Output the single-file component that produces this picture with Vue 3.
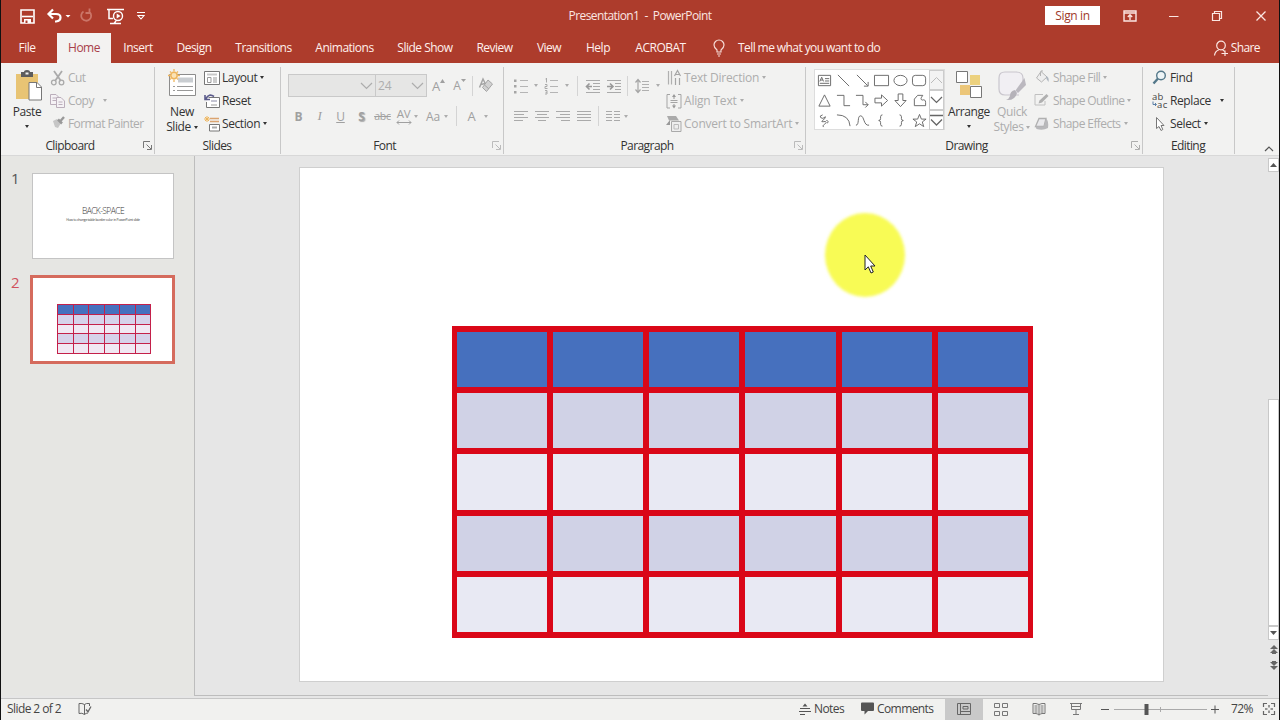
<!-- App.vue -->
<template>
  <div class="window">
    <header class="titlebar">
      <div class="quick">
        <svg class="q-save" viewBox="0 0 16 16" width="16" height="16" v-html="icons.save"></svg>
        <svg class="q-undo" viewBox="0 0 24 16" width="24" height="16" v-html="icons.undo"></svg>
        <svg class="q-redo" viewBox="0 0 16 16" width="16" height="16" v-html="icons.redo"></svg>
        <svg class="q-show" viewBox="0 0 18 16" width="18" height="16" v-html="icons.show"></svg>
        <svg class="q-more" viewBox="0 0 10 10" width="10" height="10" v-html="icons.more"></svg>
      </div>
      <div class="title">Presentation1&nbsp; -&nbsp; PowerPoint</div>
      <div class="controls">
        <button class="signin">Sign in</button>
        <svg class="c-ribbon" viewBox="0 0 14 12" width="14" height="12" v-html="icons.ribbonMode"></svg>
        <svg class="c-min" viewBox="0 0 12 12" width="12" height="12" v-html="icons.min"></svg>
        <svg class="c-restore" viewBox="0 0 12 12" width="12" height="12" v-html="icons.restore"></svg>
        <svg class="c-close" viewBox="0 0 12 12" width="12" height="12" v-html="icons.close"></svg>
      </div>
    </header>

    <nav class="tabs">
      <span
        v-for="tab in tabs"
        :key="tab.name"
        class="tab"
        :class="{ active: tab.name === activeTab }"
        :style="{ width: tab.width + 'px' }"
        @click="activeTab = tab.name"
      >{{ tab.name }}</span>
      <svg class="bulb" viewBox="0 0 14 18" width="14" height="18" v-html="icons.bulb"></svg>
      <span class="tell">Tell me what you want to do</span>
      <span class="share">
        <svg viewBox="0 0 16 16" width="16" height="16" v-html="icons.share"></svg>
        Share
      </span>
    </nav>

    <section class="ribbon">
      <div class="group clipboard">
        <div class="content">
          <div class="big">
            <svg class="paste-icon" viewBox="0 0 28 32" width="28" height="32" v-html="icons.paste"></svg>
            <span>Paste</span>
            <i class="caret"></i>
          </div>
          <div class="commands off">
            <div v-for="c in clipboardCommands" :key="c.text" class="command">
              <svg viewBox="0 0 16 16" width="16" height="16" v-html="icons[c.icon]"></svg>
              <span>{{ c.text }}</span><i v-if="c.caret" class="caret" :class="c.caret"></i>
            </div>
          </div>
        </div>
        <div class="footer"><span>Clipboard</span><svg viewBox="0 0 9 9" width="9" height="9" v-html="icons.launch"></svg></div>
      </div>

      <div class="group slides">
        <div class="content">
          <div class="big">
            <svg class="new-icon" viewBox="0 0 28 32" width="28" height="32" v-html="icons.newSlide"></svg>
            <span>New</span>
            <span>Slide<i class="caret"></i></span>
          </div>
          <div class="commands">
            <div v-for="c in slideCommands" :key="c.text" class="command">
              <svg viewBox="0 0 16 16" width="16" height="16" v-html="icons[c.icon]"></svg>
              <span>{{ c.text }}</span><i v-if="c.caret" class="caret"></i>
            </div>
          </div>
        </div>
        <div class="footer"><span>Slides</span></div>
      </div>

      <div class="group font off">
        <div class="content stack">
          <div class="line first">
            <div class="box name"><svg viewBox="0 0 13 8" width="13" height="8" v-html="icons.chevron"></svg></div>
            <div class="box size"><span>24</span><svg viewBox="0 0 13 8" width="13" height="8" v-html="icons.chevron"></svg></div>
            <span class="cell grow">A<svg viewBox="0 0 5 4" width="5" height="4"><path d="M0 4 L2.5 0 L5 4z" fill="currentColor" /></svg></span>
            <span class="cell shrink">A<svg viewBox="0 0 5 4" width="5" height="4"><path d="M0 0 L2.5 3 L5 0z" fill="currentColor" /></svg></span>
            <i class="rule"></i>
            <svg class="eraser" viewBox="0 0 16 16" width="16" height="16" v-html="icons.eraser"></svg>
          </div>
          <div class="line second">
            <span class="cell bold">B</span>
            <span class="cell italic">I</span>
            <span class="cell under">U</span>
            <span class="cell shadow">S</span>
            <span class="cell strike">abc</span>
            <span class="cell spacing">AV<svg viewBox="0 0 16 5" width="16" height="5"><path d="M1 2.5H15M3 .5 1 2.5 3 4.5M13 .5l2 2-2 2" fill="none" stroke="currentColor" /></svg></span>
            <i class="caret"></i>
            <span class="cell case">Aa</span>
            <i class="caret"></i>
            <i class="rule"></i>
            <span class="cell color">A</span>
            <i class="caret last"></i>
          </div>
        </div>
        <div class="footer"><span>Font</span><svg viewBox="0 0 9 9" width="9" height="9" v-html="icons.launch"></svg></div>
      </div>

      <div class="group paragraph off">
        <div class="content">
          <div class="stack">
            <div class="line first">
              <svg viewBox="0 0 16 16" width="16" height="16" v-html="icons.bullets"></svg>
              <i class="caret"></i>
              <svg viewBox="0 0 16 16" width="16" height="16" v-html="icons.numbers"></svg>
              <i class="caret"></i>
              <i class="rule after-lists"></i>
              <svg viewBox="0 0 16 16" width="16" height="16" v-html="icons.outdent"></svg>
              <svg class="indent" viewBox="0 0 16 16" width="16" height="16" v-html="icons.indent"></svg>
              <i class="rule"></i>
              <svg class="leading" viewBox="0 0 16 16" width="16" height="16" v-html="icons.lineSpacing"></svg>
              <i class="caret"></i>
            </div>
            <div class="line second">
              <svg v-for="a in aligns" :key="a" viewBox="0 0 14 12" width="14" height="12" v-html="icons[a]"></svg>
              <i class="rule"></i>
              <svg viewBox="0 0 14 12" width="14" height="12" v-html="icons.columns"></svg>
              <i class="caret"></i>
            </div>
          </div>
          <div class="commands">
            <div v-for="c in textCommands" :key="c.text" class="command">
              <svg viewBox="0 0 16 16" width="16" height="16" v-html="icons[c.icon]"></svg>
              <span>{{ c.text }}</span><i class="caret"></i>
            </div>
          </div>
        </div>
        <div class="footer"><span>Paragraph</span><svg viewBox="0 0 9 9" width="9" height="9" v-html="icons.launch"></svg></div>
      </div>

      <div class="group drawing">
        <div class="content">
          <div class="gallery">
            <div class="shapes">
              <svg v-for="(s, i) in shapes" :key="i" viewBox="0 0 16 16" width="16" height="16" fill="none" stroke="#666" v-html="s"></svg>
            </div>
            <div class="scroller">
              <span class="dim"><svg viewBox="0 0 13 8" width="13" height="8"><path d="M1 7 6.500 1.500 12 7" fill="none" stroke="currentColor" /></svg></span>
              <span><svg viewBox="0 0 13 8" width="13" height="8" v-html="icons.chevron"></svg></span>
              <span class="expand"><svg viewBox="0 0 13 13" width="13" height="13"><path d="M0 1.500H13M1 5.500 6.500 11 12 5.500" fill="none" stroke="currentColor" stroke-width="1.300" /></svg></span>
            </div>
          </div>
          <div class="big arrange">
            <svg viewBox="0 0 28 32" width="28" height="32" v-html="icons.arrange"></svg>
            <span>Arrange</span>
            <i class="caret"></i>
          </div>
          <div class="big quickstyles off">
            <svg viewBox="0 0 30 32" width="30" height="32" v-html="icons.styles"></svg>
            <span>Quick</span>
            <span>Styles<i class="caret"></i></span>
          </div>
          <div class="commands off">
            <div v-for="c in shapeCommands" :key="c.text" class="command">
              <svg viewBox="0 0 16 16" width="16" height="16" v-html="icons[c.icon]"></svg>
              <span>{{ c.text }}</span><i class="caret"></i>
            </div>
          </div>
        </div>
        <div class="footer"><span>Drawing</span><svg class="off" viewBox="0 0 9 9" width="9" height="9" v-html="icons.launch"></svg></div>
      </div>

      <div class="group editing">
        <div class="content">
          <div class="commands">
            <div v-for="c in editCommands" :key="c.text" class="command">
              <svg viewBox="0 0 16 16" width="16" height="16" v-html="icons[c.icon]"></svg>
              <span>{{ c.text }}</span><i v-if="c.caret" class="caret" :class="c.caret"></i>
            </div>
          </div>
        </div>
        <div class="footer"><span>Editing</span></div>
      </div>
      <svg class="collapse" viewBox="0 0 10 6" width="10" height="6"><path d="M1 5 5 1 9 5" fill="none" stroke="#555" stroke-width="1.200" /></svg>
    </section>

    <main class="main">
      <aside class="panel">
        <div class="item">
          <span class="num">1</span>
          <div class="thumb">
            <p class="thumb-title">BACK-SPACE</p>
            <p class="thumb-sub">How to change table border color in PowerPoint slide</p>
          </div>
        </div>
        <div class="item current">
          <span class="num">2</span>
          <div class="thumb">
            <div class="mini">
              <i v-for="n in 30" :key="n" :class="rowClass(n)"></i>
            </div>
          </div>
        </div>
      </aside>
      <div class="workspace">
        <div class="slide">
          <div class="table">
            <i v-for="n in 30" :key="n" :class="rowClass(n)"></i>
          </div>
          <div class="spot"></div>
          <svg class="pointer" viewBox="0 0 12 20" width="12" height="20">
            <path d="M1 1V16L4.300 12.800 7 19 9.300 18 6.700 12H11z" fill="#fff" stroke="#222" />
          </svg>
        </div>
      </div>
      <div class="scrollbar">
        <span class="arrow"><svg viewBox="0 0 7 4" width="7" height="4"><path d="M0 4 3.500 0 7 4z" fill="#555" /></svg></span>
        <span class="track"></span>
        <span class="thumb-bar"></span>
        <span class="arrow"><svg viewBox="0 0 7 4" width="7" height="4"><path d="M0 0 3.500 4 7 0z" fill="#555" /></svg></span>
        <svg class="page" viewBox="0 0 8 9" width="8" height="9"><path d="M0 4 4 0 8 4zM0 8 4 4 8 8zM2 8h4v1H2z" fill="#666" /></svg>
        <svg class="page" viewBox="0 0 8 9" width="8" height="9"><path d="M0 5 4 9 8 5zM0 1 4 5 8 1zM2 0h4v1H2z" fill="#666" /></svg>
      </div>
    </main>

    <footer class="status">
      <span class="count">Slide 2 of 2</span>
      <svg class="spell" viewBox="0 0 14 13" width="14" height="13" v-html="icons.spell"></svg>
      <svg class="notes-icon" viewBox="0 0 12 12" width="12" height="12" v-html="icons.notes"></svg>
      <span class="notes">Notes</span>
      <svg class="comments-icon" viewBox="0 0 13 13" width="13" height="13"><path d="M1 .500H12Q13 .500 13 1.500V8Q13 9 12 9H7L3.500 12.500V9H1Q0 9 0 8V1.500Q0 .500 1 .500z" fill="#555" /></svg>
      <span class="comments">Comments</span>
      <span class="view on"><svg viewBox="0 0 14 14" width="14" height="14" v-html="icons.normal"></svg></span>
      <span class="view"><svg viewBox="0 0 14 14" width="14" height="14" v-html="icons.sorter"></svg></span>
      <span class="view"><svg viewBox="0 0 14 14" width="14" height="14" v-html="icons.reading"></svg></span>
      <span class="view"><svg viewBox="0 0 14 14" width="14" height="14" v-html="icons.slideshow"></svg></span>
      <svg class="zoom" viewBox="0 0 118 14" width="118" height="14">
        <path d="M0 7.500H8M110 7.500H118M114 3.500V11.500" stroke="#555" />
        <path d="M13 7.500H106M59.500 5V10" stroke="#aaa" />
        <path d="M43.500 2H47.500V13H43.500z" fill="#555" />
      </svg>
      <span class="percent">72%</span>
      <svg class="fit" viewBox="0 0 12 12" width="12" height="12" v-html="icons.fit"></svg>
    </footer>
  </div>
</template>

<script setup>
import { ref } from 'vue'

const activeTab = ref('Home')

const tabs = [
  { name: 'File', width: 52 },
  { name: 'Home', width: 54 },
  { name: 'Insert', width: 54 },
  { name: 'Design', width: 58 },
  { name: 'Transitions', width: 81 },
  { name: 'Animations', width: 81 },
  { name: 'Slide Show', width: 80 },
  { name: 'Review', width: 59 },
  { name: 'View', width: 50 },
  { name: 'Help', width: 48 },
  { name: 'ACROBAT', width: 77 }
]

const clipboardCommands = [
  { icon: 'cut', text: 'Cut' },
  { icon: 'copy', text: 'Copy', caret: 'far' },
  { icon: 'brush', text: 'Format Painter' }
]

const slideCommands = [
  { icon: 'layout', text: 'Layout', caret: true },
  { icon: 'reset', text: 'Reset' },
  { icon: 'section', text: 'Section', caret: true }
]

const textCommands = [
  { icon: 'direction', text: 'Text Direction' },
  { icon: 'alignText', text: 'Align Text' },
  { icon: 'smartArt', text: 'Convert to SmartArt' }
]

const shapeCommands = [
  { icon: 'fill', text: 'Shape Fill' },
  { icon: 'outline', text: 'Shape Outline' },
  { icon: 'effects', text: 'Shape Effects' }
]

const editCommands = [
  { icon: 'find', text: 'Find' },
  { icon: 'replace', text: 'Replace', caret: 'far' },
  { icon: 'select', text: 'Select', caret: 'near' }
]

const aligns = ['left', 'center', 'right', 'justify']

// header row first, then banded rows
const rowClass = (n) => {
  const row = Math.ceil(n / 6)
  if (row === 1) return 'head'
  return row % 2 === 0 ? 'dark' : 'light'
}

// shapes gallery, three rows of six
const shapes = [
  '<path d="M1.500 2.500H14.500V13.500H1.500zM8.500 6H13M8.500 8.500H13M3 11H13"/><path d="M3 9 5 4.500 7 9M3.800 7.500H6.200"/>',
  '<path d="M2 2 14 14"/>',
  '<path d="M2 2 13.500 13.500M14 9.500V14H9.500"/>',
  '<path d="M.500 2.500H15.500V13.500H.500z"/>',
  '<ellipse cx="8" cy="8" rx="7" ry="5.500"/>',
  '<rect x=".500" y="2.500" width="14" height="11" rx="3"/>',
  '<path d="M8 2 14 14H2z"/>',
  '<path d="M1 2.500H8.500V13.500H15"/>',
  '<path d="M1 2.500H8.500V12.500H14M11 9.500 14 12.500 11 15.500"/>',
  '<path d="M1 5.500H8V2L14.500 8 8 14V10.500H1z"/>',
  '<path d="M5.500 1V8H2L8 14.500 14 8H10.500V1z"/>',
  '<path d="M2.500 13.500V6.500L6 2.500H11.500Q8 7 11 7.500Q14.500 6.500 14.500 10V13.500z"/>',
  '<path d="M6 2Q2 3 4 5T9 4Q9 6 6 8T9 9Q11 10 8 12T7 15M10 8Q13 8 11 11"/>',
  '<path d="M1 2Q14 2 15 14"/>',
  '<path d="M1 13C5 13 2 3 6 3S9 14 15 13"/>',
  '<path d="M9 2Q7 2 7 4V6Q7 8 5 8Q7 8 7 10V12Q7 14 9 14"/>',
  '<path d="M7 2Q9 2 9 4V6Q9 8 11 8Q9 8 9 10V12Q9 14 7 14"/>',
  '<path d="M8 1.500 10 6.500H15L11 9.500 12.500 14.500 8 11.500 3.500 14.500 5 9.500 1 6.500H6z"/>'
]

const icons = {
  save: '<path d="M2 2H15V15H2z" fill="none" stroke="#fff" stroke-width="1.600"/><path d="M3 8.500H14" stroke="#fff" stroke-width="1.600"/><path d="M5 11H12V15H5z" fill="#fff"/><path d="M6.500 12.500H8.500V15H6.500z" fill="#ad3c2c"/>',
  undo: '<path d="M2 6H9Q13.500 6 13.500 9.500T9 13.500H8M6 1.500 1.500 6 6 10.500" fill="none" stroke="#fff" stroke-width="2.200"/><path d="M18.500 7H23.500L21 9.500z" fill="#fff"/>',
  redo: '<path d="M11.500 4A5 5 0 1 1 5.500 3.500M11.500 .500V5H7.500" fill="none" stroke="#cb7568" stroke-width="1.800"/>',
  show: '<path d="M1 1.500H18M3 2V10.500H7M8 15.500 10 13M4 15.500H15" fill="none" stroke="#fff" stroke-width="1.500"/><circle cx="12" cy="8" r="4.500" fill="#ad3c2c" stroke="#fff" stroke-width="1.400"/><path d="M10.700 5.500 14.500 8 10.700 10.500z" fill="#fff"/>',
  more: '<path d="M1 1.500H9M2 4.500H8L5 8z" fill="none" stroke="#fff" stroke-width="1.100"/>',
  ribbonMode: '<path d="M1 1H13V11H1zM1 3H13" fill="none" stroke="#fbe6e2" stroke-width="1.400"/><path d="M7 10V5M4.800 7 7 4.800 9.200 7" fill="none" stroke="#fbe6e2" stroke-width="1.400"/>',
  min: '<path d="M1 6.500H10.500" stroke="#fbe6e2"/>',
  restore: '<path d="M1.500 3.500H8.500V10.500H1.500zM3.500 3V1.500H10.500V8.500H9" fill="none" stroke="#fbe6e2" stroke-width="1.200"/>',
  close: '<path d="M1.500 1.500 10.500 10.500M10.500 1.500 1.500 10.500" stroke="#fbe6e2" stroke-width="1.300"/>',
  bulb: '<path d="M5 13V11Q2 8.500 2 6A5 5 0 0 1 12 6Q12 8.500 9 11V13z" fill="none" stroke="#f6dad5" stroke-width="1.200"/><path d="M5 15H9M6 17H8" stroke="#f6dad5" stroke-width="1.200"/>',
  share: '<circle cx="8" cy="5.500" r="4.300" fill="none" stroke="#fbe6e2" stroke-width="1.200"/><path d="M1.500 15.500Q2 11 6 9.700M9.500 10Q11 10.500 11.500 11.500M8.500 13.500H15M12 10.500V16" fill="none" stroke="#fbe6e2" stroke-width="1.200"/>',
  paste: '<path d="M2 5H24V30H2z" fill="#e8c474"/><path d="M7 3H10Q10 1 13 1T16 3H19V8H7z" fill="#5d5d5d"/><path d="M11.500 3.500H14.500V5.500H11.500z" fill="#f1f1ef"/><path d="M15 13.500H23L27.500 18V31H15z" fill="#fff" stroke="#777"/><path d="M22.500 14V18.500H27" fill="none" stroke="#777"/>',
  cut: '<path d="M4 1 11 11M12 1 5 11" stroke="#aaa" stroke-width="1.800"/><circle cx="3.800" cy="12.500" r="2.300" fill="none" stroke="#aaa" stroke-width="1.300"/><circle cx="11.500" cy="12.500" r="2.300" fill="none" stroke="#aaa" stroke-width="1.300"/>',
  copy: '<path d="M.500 1.500H6L8.500 4V11.500H.500zM2.500 5H6M2.500 7.500H6" fill="#f5f2f5" stroke="#bbaebb"/><path d="M6.500 4.500H11L14.500 8V14.500H6.500zM8.500 9H12.500M8.500 11.500H12.500" fill="#f5f2f5" stroke="#bbaebb"/>',
  brush: '<path d="M3 5 7 3 11 7 8 12 5 11z" fill="#c6c6c6"/><path d="M8 3.500 12 7.500" stroke="#999" stroke-width="2.500"/><path d="M10.500 5 14 1" stroke="#999" stroke-width="2.400"/>',
  newSlide: '<path d="M1.500 5.500H27.500V26.500H1.500z" fill="#fff" stroke="#8c8c8c"/><path d="M10 8.500H25V13.500H10z" fill="#c9cdd1"/><path d="M5 17.500H7M9 17.500H25M5 21.500H7M9 21.500H25" stroke="#999"/><circle cx="6" cy="6.500" r="3.200" fill="#fbe3b5" stroke="#eeb55c" stroke-width="1.500"/><path d="M6 0V2.500M6 10.500V13M0 6.500H2M10 6.500H12M2 2.500 3 3.500M10 2.500 9 3.500M2 10.500 3 9.500M10 10.500 9 9.500" stroke="#eeb55c" stroke-width="1.300"/>',
  layout: '<path d="M.500 1.500H15.500V14.500H.500z" fill="#fff" stroke="#777"/><path d="M3 3.500H13V5.500H3z" fill="#c8c8c8"/><path d="M3.500 7.500H7V12.500H3.500zM9 8H13M9 10H13M9 12H13" fill="none" stroke="#999"/>',
  reset: '<path d="M4.500 4.500H15.500V14.500H2.500V9" fill="#fff" stroke="#777"/><path d="M7 7H13V9H7z" fill="#c4c4d2"/><path d="M7 12H13" stroke="#999"/><path d="M2 5.500Q5 0 10 3.500M1 2V6.500H6" fill="none" stroke="#5b5b8b" stroke-width="1.600"/>',
  section: '<path d="M6 2.500H15M6 5.500H15" stroke="#dba36f" stroke-width="1.500"/><path d="M5.500 8.500H15.500V15H5.500z" fill="#fff" stroke="#777"/><path d="M8 10.500H13V12.500H8z" fill="#aaa"/><path d="M3 0V6M0 3H6M1 1 5 5M5 1 1 5" stroke="#eeb55c"/>',
  launch: '<path d="M.500 7V.500H7M3.500 3.500 8 8M8.500 4V8.500H4" fill="none" stroke="currentColor"/>',
  chevron: '<path d="M1 1 6.500 6.500 12 1" fill="none" stroke="currentColor" stroke-width="1.200"/>',
  eraser: '<path d="M1.500 9.500 5 1 8 7M3 6.500 7 5.500" fill="none" stroke="#a5a5a5" stroke-width="1.500"/><path d="M10 2 14.500 6 8.500 13.500 4.500 9.500z" fill="#d2d2d2" stroke="#a5a5a5"/><path d="M6.500 7 11 11" stroke="#a5a5a5"/>',
  bullets: '<path d="M7 2.500H15M7 8.500H15M7 14.500H15" stroke="#b5b5b5"/><path d="M1 1.500H3.500V4H1zM1 7H3.500V9.500H1zM1 13H3.500V15.500H1z" fill="#a5a5a5"/>',
  numbers: '<path d="M6 2.500H14M6 8.500H14M6 14.500H14" stroke="#b5b5b5"/><path d="M2.500 0V4.500M1.500 1H2.500M1 6.500H3V8.500H1V10.500H3.500M1 12.500H3V16H1M1.500 14.300H3" fill="none" stroke="#aaa"/>',
  outdent: '<path d="M1 2.500H15M8 5.500H15M8 8.500H15M8 11.500H15M1 14.500H15" stroke="#aaa"/><path d="M7 8.500H2M4.500 5.500 1.500 8.500 4.500 11.500" fill="none" stroke="#999" stroke-width="1.600"/>',
  indent: '<path d="M1 2.500H15M9 5.500H15M9 8.500H15M9 11.500H15M1 14.500H15" stroke="#aaa"/><path d="M1 8.500H6M4 5.500 7 8.500 4 11.500" fill="none" stroke="#999" stroke-width="1.600"/>',
  lineSpacing: '<path d="M7 3.500H14M7 6.500H14M7 9.500H14M7 12.500H14" stroke="#b0b0b0"/><path d="M3 2V14M.500 4.500 3 1.500 5.500 4.500M.500 11.500 3 14.500 5.500 11.500" fill="none" stroke="#a5a5a5" stroke-width="1.200"/>',
  left: '<path d="M0 1.500H14M0 4.500H10M0 7.500H14M0 10.500H9" stroke="#aaa"/>',
  center: '<path d="M0 1.500H14M2 4.500H12M0 7.500H14M3 10.500H11" stroke="#aaa"/>',
  right: '<path d="M0 1.500H14M4 4.500H14M0 7.500H14M5 10.500H14" stroke="#aaa"/>',
  justify: '<path d="M0 1.500H14M0 4.500H14M0 7.500H14M0 10.500H14" stroke="#aaa"/>',
  columns: '<path d="M0 1.500H6M0 4.500H6M0 7.500H6M0 10.500H6M8 1.500H14M8 4.500H14M8 7.500H14M8 10.500H14" stroke="#aaa"/>',
  direction: '<path d="M2.500 1V14.500M5.500 1V14.500" stroke="#b0b0b0" stroke-width="1.200"/><path d="M8.500 6 11.500 .500 14.500 6M9.500 4.500H13.500M9.500 8V15M13.500 8V15" fill="none" stroke="#a5a5a5" stroke-width="1.200"/>',
  alignText: '<path d="M4 1.500H1V15H4M12 1.500H15V15H12M4.500 7.500H11.500M4.500 9.500H11.500" fill="none" stroke="#a5a5a5"/><path d="M6 4 8 1 10 4zM6 12.500 8 15.500 10 12.500z" fill="#999"/><path d="M8 3V6M8 11V13" stroke="#999"/>',
  smartArt: '<path d="M1 0H10L13 4.500H3z" fill="#aaa"/><path d="M5.500 5.500H15V15.500H5.500z" fill="#eee" stroke="#aaa"/><path d="M8 8.500H12.500V13H8z" fill="none" stroke="#bbb"/><path d="M0 9 4 4V9z" fill="#999"/>',
  arrange: '<path d="M15 6H25V16H15z" fill="#ecd17e"/><path d="M5 16H15V26H5z" fill="#ecc679"/><path d="M1.500 2.500H12.500V13.500H1.500zM15.500 17.500H26.500V28.500H15.500z" fill="#fff" stroke="#777"/>',
  styles: '<path d="M22 26H8Q2 26 2 20V9Q2 3 8 3H19Q26 3 26 9V12" fill="#f1eff3" stroke="#c9c6cd" stroke-width="1.200"/><path d="M27.500 9 29 16 21 24 18.500 21.500z" fill="#bbb8bf"/><path d="M18 21Q13 22 13 27Q12 30 9 31Q18 32 20 24z" fill="#b5b2b9"/>',
  fill: '<path d="M7 1.500 13 7 7.500 12 2.500 8z" fill="#eee" stroke="#b5b5b5"/><path d="M6.500 6V2.500Q6.500 0 9 1" fill="none" stroke="#b5b5b5"/><path d="M12 6Q15.500 7 14.500 12L12.500 9z" fill="#adb5be"/>',
  outline: '<path d="M9 1.500H1V12H11V8" fill="none" stroke="#c0c0c0"/><path d="M4.500 10.500 5.500 7.500 12.500 1 14.500 3 8 9.500z" fill="#b0b0b0"/>',
  effects: '<path d="M5 2.500H12L10 10.500H1.500z" fill="#e9e9ec" stroke="#b0b0b0" stroke-width="1.300"/><path d="M12 2.500Q15 5 14 12Q9 15 2.500 13L1.500 10.500H10z" fill="#b8b8bb"/>',
  find: '<circle cx="9" cy="5.500" r="4.300" fill="#eef5f7" stroke="#54788a" stroke-width="1.400"/><path d="M6 8.500 1.500 13.500" stroke="#54788a" stroke-width="2.400"/>',
  replace: '<text x="0" y="6.500" font-size="9.500" fill="#444" textLength="11">ab</text><text x="5" y="14.500" font-size="9.500" fill="#444" textLength="10">ac</text><path d="M1 8.500V11.500H4M3 10 4.500 11.500 3 13" fill="none" stroke="#5a7fa5"/>',
  select: '<path d="M4.500 1.500V12.500L7 10.500 9 14.500 10.800 13.500 9 9.500H12z" fill="#fff" stroke="#777"/>',
  spell: '<path d="M6.500 2.500Q4 1 1 1.500V11.500Q4 10.500 6.500 12.500V2.500Q8 1 11.500 1.500V4M6.500 12.500Q8 11 10 11" fill="none" stroke="#666"/><path d="M8 7.500 10 9.800 13 4.500" fill="none" stroke="#666" stroke-width="1.300"/>',
  notes: '<path d="M1 5.500H11M0 8.500H12M1 11.500H6" stroke="#555"/><path d="M3.500 3.500 6 .500 8.500 3.500z" fill="#555"/>',
  normal: '<path d="M.500 1.500H13.500V12.500H.500zM3.500 1.500V12.500M3.500 9.500H13.500M6 4.500H11V7H6z" fill="none" stroke="#666"/>',
  sorter: '<path d="M.500 1.500H5.500V5.500H.500zM8.500 1.500H13.500V5.500H8.500zM.500 9.500H5.500V13.500H.500zM8.500 9.500H13.500V13.500H8.500z" fill="none" stroke="#777"/>',
  reading: '<path d="M7 2.500Q4 1 1 1.500V11.500Q4 11 7 12.500Q10 11 13 11.500V1.500Q10 1 7 2.500V13.500M2.500 4H5.500M2.500 6H5.500M2.500 8H5.500M8.500 4H11.500M8.500 6H11.500M8.500 8H11.500M2.500 10H5.500M8.500 10H11.500" fill="none" stroke="#777"/>',
  slideshow: '<path d="M1 1.500H13M2.500 2V7.500H11.500V2M7 7.500V12.500M4 12.500H10M3 4.500H11" fill="none" stroke="#777"/>',
  fit: '<path d="M.500 4V.500H4M8 .500H11.500V4M11.500 8V11.500H8M4 11.500H.500V8" fill="none" stroke="#666" stroke-width="1.200"/><path d="M6 2V4.500M6 7.500V10M2 6H4.500M7.500 6H10" stroke="#777" stroke-width="1.500"/>'
}
</script>

<style>
body {
  margin: 0;
  background: #000;
}
</style>

<style scoped>
.window {
  box-sizing: border-box;
  width: 1280px;
  height: 720px;
  border-left: 1px solid #111;
  border-right: 1px solid #111;
  display: flex;
  flex-direction: column;
  overflow: hidden;
  font-family: 'Open Sans', 'Noto Sans', sans-serif;
  font-size: 12px;
  letter-spacing: -0.58px;
  color: #333;
  background: #e6e6e6;
}

svg {
  flex: none;
  display: block;
  overflow: visible;
}

.titlebar {
  height: 32px;
  flex: none;
  display: grid;
  grid-template-columns: 400px 478px 400px;
  background: #ad3c2c;
  color: #fbe6e2;
}

.quick,
.controls {
  display: flex;
  align-items: center;
}

.q-save { margin-left: 18px; }
.q-undo { margin-left: 12px; }
.q-redo { margin-left: 7px; }
.q-show { margin-left: 12px; }
.q-more { margin-left: 12px; }

.title {
  text-align: center;
  line-height: 31px;
}

.controls {
  height: 31px;
  padding-left: 166px;
}

.signin {
  width: 55px;
  height: 19px;
  padding: 0;
  border: 0;
  background: #fff;
  color: #a0392b;
  font: inherit;
  letter-spacing: -0.35px;
}

.c-ribbon { margin-left: 23px; }
.c-min { margin-left: 31px; }
.c-restore { margin-left: 31px; }
.c-close { margin-left: 32px; }

.tabs {
  height: 31px;
  flex: none;
  display: flex;
  align-items: center;
  background: #ad3c2c;
  color: #fff0ed;
}

.tab {
  height: 30px;
  margin-top: 1px;
  line-height: 30px;
  text-align: center;
  letter-spacing: -0.5px;
}

.tab:first-child {
  margin-right: 4px;
}

.tab.active {
  background: #f3f2f1;
  color: #a8404a;
}

.bulb { margin-left: 13px; }

.tell {
  margin-left: 12px;
  flex: 1;
}

.share {
  display: flex;
  align-items: center;
  gap: 2px;
  margin-right: 19px;
}

.ribbon {
  box-sizing: border-box;
  height: 93px;
  flex: none;
  display: flex;
  background: #f2f2f1;
  border-bottom: 1px solid #d8d8d8;
}

.group {
  box-sizing: border-box;
  display: flex;
  flex-direction: column;
  height: 87px;
  margin-top: 4px;
  border-right: 1px solid #c8c8c8;
}

.clipboard { width: 154px; }
.slides { width: 126px; }
.font { width: 223px; }
.paragraph { width: 302px; }
.drawing { width: 337px; }
.editing { width: 92px; }

.content {
  display: flex;
  height: 70px;
}

.footer {
  display: flex;
  align-items: center;
  height: 17px;
  margin-top: 1px;
  color: #333;
}

.footer span {
  flex: 1;
  text-align: center;
  text-indent: -4px;
}

.slides .footer span,
.editing .footer span {
  text-indent: -1px;
}

.footer svg {
  margin-right: 2px;
  color: #777;
}

.off,
.off .footer svg,
.footer svg.off {
  color: #adadad;
}

.off .footer {
  color: #333;
}

.off .footer svg {
  color: #bbb;
}

.big {
  width: 42px;
  display: flex;
  flex-direction: column;
  align-items: center;
  white-space: nowrap;
  letter-spacing: -0.4px;
}

.big svg {
  margin: 2px 0 3px;
}

.big span {
  line-height: 15px;
}

.big > .caret {
  margin: 6px 0 0;
}

.clipboard .big { width: 36px; margin-left: 8px; }
.clipboard .paste-icon { margin-left: 2px; }
.clipboard .commands { margin-left: 5px; }
.slides .big { width: 44px; margin-left: 5px; }
.slides .commands { margin-left: 0; }

.caret {
  flex: none;
  display: inline-block;
  width: 0;
  height: 0;
  border: 2.5px solid transparent;
  border-top: 3px solid currentColor;
  border-bottom: 0;
  margin-left: 3px;
  vertical-align: 2px;
}

.caret.far { margin-left: 9px; }

.commands {
  display: flex;
  flex-direction: column;
  margin-top: -1px;
  white-space: nowrap;
}

.command {
  display: flex;
  align-items: center;
  height: 23px;
}

.command svg {
  margin-right: 2px;
}

.slides .command,
.editing .command { letter-spacing: -0.4px; }
.paragraph .command { letter-spacing: -0.2px; }

.line {
  display: flex;
  align-items: center;
  letter-spacing: -0.2px;
}

.rule {
  flex: none;
  width: 1px;
  height: 20px;
  background: #d4d4d4;
}

.font .content {
  flex-direction: column;
}

.font .line {
  padding-left: 7px;
}

.font .first {
  height: 23px;
  margin-top: 7px;
}

.font .second {
  height: 24px;
  margin-top: 7px;
}

.box {
  box-sizing: border-box;
  height: 23px;
  display: flex;
  align-items: center;
  justify-content: flex-end;
  padding-right: 2px;
  border: 1px solid #c9c9c9;
  background: #e6e6e5;
}

.box.name { width: 88px; }
.box.size { width: 51px; border-left: 0; }
.box.size span { flex: 1; padding-left: 2px; }

.cell {
  width: 21px;
  text-align: center;
  font-size: 12px;
  color: #a0a0a0;
}

.grow,
.shrink {
  display: flex;
  justify-content: center;
  font-size: 13px;
}

.grow { margin-left: 1px; }
.shrink { font-size: 12px; margin-right: 2px; }
.grow svg, .shrink svg { margin-top: 2px; }
.eraser { margin-left: 5px; }
.bold { font-weight: 700; }
.italic { font-style: italic; font-family: 'Liberation Serif', serif; font-size: 13px; }
.under { text-decoration: underline; }
.shadow { font-weight: 700; text-shadow: 1px 1px 1px #aaa; }
.strike { text-decoration: line-through; font-size: 10.5px; }
.spacing { font-size: 11.5px; line-height: 12px; }
.spacing svg { margin: 0 auto; }
.case { width: 22px; margin-left: 4px; }
.font .second .caret { margin-left: 0; }
.font .second .caret.last { margin-left: 2px; }
.font .second .rule { margin-left: 8px; }
.color { margin-left: 4px; font-size: 13px; }

.paragraph .stack {
  width: 162px;
}

.paragraph .line {
  padding-left: 9px;
}

.paragraph .first {
  height: 23px;
  margin-top: 7px;
}

.paragraph .second {
  height: 24px;
  margin-top: 7px;
  padding-left: 10px;
}

.paragraph .first .caret { margin-left: 5px; margin-right: 6px; }
.paragraph .first .rule { margin-left: 0; margin-right: 7px; }
.paragraph .first .after-lists { margin-left: 2px; }
.paragraph .first .indent { margin: 0 5px 0 5px; }
.paragraph .second svg { margin-right: 7px; }
.paragraph .second .rule { margin-right: 7px; }
.paragraph .second .caret { margin-left: -3px; }

.gallery {
  box-sizing: border-box;
  width: 131px;
  height: 61px;
  margin: 2px 0 0 8px;
  display: flex;
  border: 1px solid #ddd;
  background: #fff;
}

.shapes {
  width: 114px;
  display: grid;
  grid-template-columns: repeat(6, 19px);
  grid-template-rows: repeat(3, 20px);
  place-items: center;
}

.shapes svg {
  width: 15px;
  height: 15px;
}

.scroller {
  width: 15px;
  display: grid;
  grid-template-rows: repeat(3, 20px);
  color: #666;
}

.scroller span {
  box-sizing: border-box;
  display: flex;
  align-items: center;
  justify-content: center;
  border: 1px solid #ccc;
}

.scroller .dim {
  color: #bbb;
  background: #f3f3f3;
}

.arrange { width: 44px; margin-left: 2px; }
.quickstyles { width: 42px; }
.drawing .commands { margin-left: 1px; }
.drawing .command svg { margin-right: 3px; }
.editing .commands { margin-left: 9px; }

.collapse {
  align-self: flex-end;
  margin: 0 0 3px 29px;
}

.main {
  flex: 1;
  min-height: 0;
  display: flex;
}

.panel {
  box-sizing: border-box;
  width: 194px;
  height: 540px;
  padding-top: 17px;
  background: #e6e6e3;
  border-right: 1px solid #bdbdbd;
}

.item {
  display: flex;
  margin-bottom: 16px;
}

.num {
  width: 28px;
  margin-right: 1px;
  text-align: center;
  font-size: 15px;
  line-height: 11px;
  color: #555;
}

.current .num {
  color: #d0505c;
  line-height: 15px;
}

.thumb {
  box-sizing: border-box;
  width: 142px;
  height: 86px;
  margin-left: 2px;
  border: 1px solid #c4c4c4;
  background: #fff;
  text-align: center;
}

.current .thumb {
  width: 145px;
  height: 89px;
  margin-left: 0;
  border: 3px solid #d56b5d;
}

.thumb-title {
  margin: 31px 0 0;
  font-size: 8.5px;
  font-weight: 300;
  line-height: 12px;
  letter-spacing: -0.6px;
}

.thumb-sub {
  margin: 0;
  font-size: 3.4px;
  line-height: 6px;
  letter-spacing: -0.2px;
}

.mini,
.table {
  box-sizing: border-box;
  display: grid;
  grid-template-columns: repeat(6, 1fr);
  grid-template-rows: repeat(5, 1fr);
}

.mini {
  width: 94px;
  height: 50px;
  margin: 26px 0 0 24px;
  padding: 1px;
  gap: 1px;
  background: #c4204a;
}

.table {
  width: 581px;
  height: 312px;
  padding: 6px 5px;
  gap: 6px;
  margin: 158px 0 0 152px;
  background: #da0718;
}

.head { background: #4670be; }
.dark { background: #d0d2e6; }
.light { background: #e8e9f3; }
.mini .dark { background: #d6d2ea; }
.mini .light { background: #f0e8f3; }

.workspace {
  flex: 1;
  height: 540px;
  box-sizing: border-box;
  border-bottom: 1px solid #bdbdbd;
  padding: 11px 0 0 104px;
}

.slide {
  position: relative;
  box-sizing: border-box;
  display: flow-root;
  width: 865px;
  height: 515px;
  border: 1px solid #cfcfcf;
  background: #fff;
}

.spot {
  position: absolute;
  left: 525px;
  top: 45px;
  width: 80px;
  height: 84px;
  border-radius: 50%;
  background: #f8fb55;
  filter: blur(1.5px);
}

.pointer {
  position: absolute;
  left: 564px;
  top: 86px;
}

.scrollbar {
  width: 11px;
  height: 540px;
  display: flex;
  flex-direction: column;
  align-items: center;
}

.arrow {
  box-sizing: border-box;
  width: 11px;
  height: 14px;
  display: flex;
  align-items: center;
  justify-content: center;
  background: #fff;
  border: 1px solid #c8c8c8;
}

.arrow:first-child { margin-top: 2px; }

.track { height: 227px; }

.thumb-bar {
  box-sizing: border-box;
  width: 11px;
  height: 227px;
  background: #fff;
  border: 1px solid #c8c8c8;
}

.page { margin: 5px 0 2px; }

.status {
  box-sizing: border-box;
  height: 22px;
  flex: none;
  display: flex;
  align-items: center;
  padding-bottom: 2px;
  border-top: 1px solid #c6c6c6;
  background: #f1f1ef;
  color: #444;
}

.count { width: 71px; padding-left: 6px; }
.notes-icon { margin-left: 707px; }
.notes { width: 44px; margin-left: 3px; }
.comments-icon { margin-left: 3px; }
.comments { width: 68px; margin-left: 3px; }

.view {
  box-sizing: border-box;
  width: 37.5px;
  height: 21px;
  display: flex;
  align-items: center;
  justify-content: center;
}

.view.on {
  background: #c9c9c9;
  margin-bottom: -2px;
  padding-bottom: 2px;
}

.zoom { margin-left: 6px; }
.percent { width: 25px; margin-left: 12px; letter-spacing: -0.6px; }
.fit { margin-left: 7px; }
</style>
